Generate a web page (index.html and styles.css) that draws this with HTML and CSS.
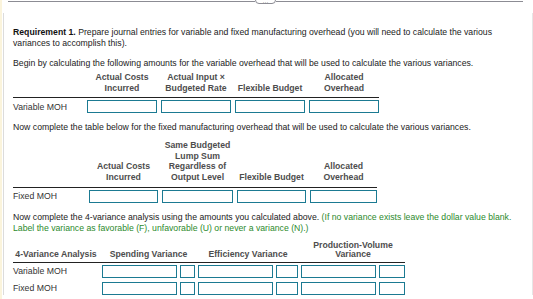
FILE: index.html
```html
<!DOCTYPE html>
<html lang="en">
<head>
    <meta charset="UTF-8">
    <meta name="viewport" content="width=device-width, initial-scale=1.0">
    <title>Requirement 1</title>
    <link rel="stylesheet" href="styles.css">
</head>
<body>
	<div class="page">
		<div class="topbar">
			<span class="topbar_line"></span>
			<button class="more_btn">···</button>
			<span class="topbar_line"></span>
		</div>

		<div class="panel">
			<p class="intro"><b>Requirement 1.</b> Prepare journal entries for variable and fixed manufacturing overhead (you will need to calculate the various variances to accomplish this).</p>
			<p class="lead">Begin by calculating the following amounts for the variable overhead that will be used to calculate the various variances.</p>

			<div class="calc calc_var">
				<div class="calc_head">
					<span></span>
					<span>Actual Costs<br>Incurred</span>
					<span>Actual Input ×<br>Budgeted Rate</span>
					<span>Flexible Budget</span>
					<span>Allocated<br>Overhead</span>
				</div>
				<div class="calc_row">
					<span class="row_label">Variable MOH</span>
					<input type="text">
					<input type="text">
					<input type="text">
					<input type="text">
				</div>
			</div>

			<p class="lead">Now complete the table below for the fixed manufacturing overhead that will be used to calculate the various variances.</p>

			<div class="calc calc_fixed">
				<div class="calc_head">
					<span></span>
					<span>Actual Costs<br>Incurred</span>
					<span>Same Budgeted<br>Lump Sum<br>Regardless of<br>Output Level</span>
					<span>Flexible Budget</span>
					<span>Allocated<br>Overhead</span>
				</div>
				<div class="calc_row">
					<span class="row_label">Fixed MOH</span>
					<input type="text">
					<input type="text">
					<input type="text">
					<input type="text">
				</div>
			</div>

			<p class="lead">Now complete the 4-variance analysis using the amounts you calculated above. <span class="hint">(If no variance exists leave the dollar value blank. Label the variance as favorable (F), unfavorable (U) or never a variance (N).)</span></p>

			<div class="calc calc_four">
				<div class="calc_head">
					<span>4-Variance Analysis</span>
					<span class="span2">Spending Variance</span>
					<span class="span2">Efficiency Variance</span>
					<span class="span2">Production-Volume<br>Variance</span>
				</div>
				<div class="calc_row">
					<span class="row_label">Variable MOH</span>
					<input type="text">
					<input type="text">
					<input type="text">
					<input type="text">
					<input type="text">
					<input type="text">
				</div>
				<div class="calc_row">
					<span class="row_label">Fixed MOH</span>
					<input type="text">
					<input type="text">
					<input type="text">
					<input type="text">
					<input type="text">
					<input type="text">
				</div>
			</div>
		</div>
	</div>
</body>
</html>
```

FILE: styles.css
```css
body{
	margin: 0;
	padding: 0;
	background: #fff;
	font-family: "Liberation Sans", Arial, sans-serif;
	font-size: 8.7px;
	color: #222;
}
.page{
	border-left: 2px solid #fbf4dc;
	min-height: 299px;
	box-sizing: border-box;
}

/* collapse bar on top */
.topbar{
	display: flex;
	align-items: flex-start;
	height: 5px;
	padding: 0 10px 0 6px;
}
.topbar_line{
	flex: 1;
	margin-top: 1px;
	border-top: 1.5px solid #8c8c94;
}
.more_btn{
	width: 21px;
	height: 5px;
	margin-top: -1px;
	padding: 0;
	border: 1px solid #8c8c94;
	border-radius: 0 0 4px 4px;
	background: #fff;
	color: #555;
	font-size: 6px;
	line-height: 2px;
	overflow: hidden;
}

.panel{
	margin: 8px 0 0 1px;
	border-left: 1px solid #dcdcdc;
	border-right: 1px solid #e6e6e6;
	padding: 14px 12px 0 9px;
	min-height: 270px;
	box-sizing: border-box;
}
p{
	margin: 0;
	line-height: 11px;
	max-width: 505px;
}
.intro b{ color: #111;}
.lead{ margin-top: 9px;}
.hint{ color: #2c8a2c;}

/* calculation grids */
.calc{
	width: fit-content;
}
.calc_head,
.calc_row{
	display: grid;
	column-gap: 4px;
}
.calc_head{
	border-bottom: 1.5px solid #222;
	padding-bottom: 4px;
	font-weight: bold;
	color: #4d4d4d;
	line-height: 10.6px;
}
.calc_head span{
	align-self: end;
	text-align: center;
	white-space: nowrap;
}
.calc_row{
	align-items: center;
	padding-top: 2px;
}
.row_label{
	color: #333;
}
.calc input{
	box-sizing: border-box;
	height: 13px;
	width: 100%;
	margin: 0;
	padding: 0 2px;
	border: 1px solid #1b7a92;
	border-radius: 0;
	background: #fff;
}

.calc_var{ margin-top: 3px;}
.calc_var .calc_head,
.calc_var .calc_row{
	grid-template-columns: 70px 70px 70px 70px 70px;
}

.calc_fixed{ margin-top: 7px;}
.calc_fixed .calc_head,
.calc_fixed .calc_row{
	grid-template-columns: 72px 69px 71px 69px 67px;
}

.calc_four{ margin-top: 7px;}
.calc_four .calc_head,
.calc_four .calc_row{
	grid-template-columns: 86px 75px 15px 75px 22px 75px 26px;
	column-gap: 3px;
}
.calc_four .calc_head{
	line-height: 9.5px;
	padding-bottom: 2px;
}
.calc_four .calc_row + .calc_row{ padding-top: 4px;}
.span2{ grid-column: span 2;}
```
